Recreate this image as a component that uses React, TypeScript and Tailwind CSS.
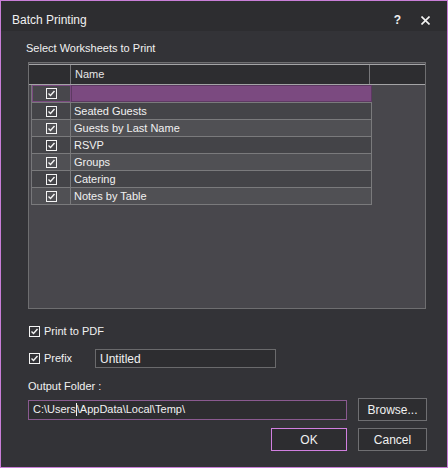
import React from "react";

const ROWS = [
  "",
  "Seated Guests",
  "Guests by Last Name",
  "RSVP",
  "Groups",
  "Catering",
  "Notes by Table",
];

function Check() {
  return (
    <svg width="11" height="11" viewBox="0 0 11 11" className="shrink-0">
      <rect x="0.5" y="0.5" width="10" height="10" fill="none" stroke="#f4f4f4" />
      <polyline
        points="2.5,5.5 4.5,7.5 8.5,3"
        fill="none"
        stroke="#f4f4f4"
        strokeWidth="1.4"
      />
    </svg>
  );
}

function Btn({ label, w, accent }: { label: string; w: string; accent?: boolean }) {
  return (
    <div
      className={`${w} flex h-[23px] items-center justify-center border bg-[#2d2d30] text-[12px] text-[#f1f1f1] ${
        accent ? "border-[#d17fe0]" : "border-[#6f6f72]"
      }`}
    >
      {label}
    </div>
  );
}

export default function App() {
  return (
    <div
      className="flex h-[468px] w-[448px] flex-col border border-[#c97ed8] bg-[#333337] text-[11px] text-[#f1f1f1]"
      style={{ fontFamily: '"Liberation Sans", Arial, sans-serif' }}
    >
      {/* title bar */}
      <div className="flex h-[30px] items-start bg-[#2d2d30] pl-[11px] pt-[12px] text-[12px] leading-[14px]">
        <span>Batch Printing</span>
        <span className="ml-auto mr-[20px] font-bold">?</span>
        <svg width="9" height="9" viewBox="0 0 9 9" className="mr-[17px] mt-[3px]">
          <path d="M0.5 0.5 L8.5 8.5 M8.5 0.5 L0.5 8.5" stroke="#f4f4f4" strokeWidth="1.6" />
        </svg>
      </div>

      <div className="mt-[9px] h-[16px] pl-[25px] leading-[16px]">Select Worksheets to Print</div>

      {/* worksheet grid */}
      <div className="ml-[27px] mt-[6px] h-[247px] w-[398px] border border-[#6e6e70] bg-[#48474c] pt-px">
        <div className="flex h-[21px] border-y border-[#a4a4a6] bg-[#2d2d30]">
          <div className="w-[41px]" />
          <div className="flex w-[299px] items-center border-l border-[#77777a] pl-[4px] text-[#e6e6e6]">
            Name
          </div>
          <div className="flex-1 border-l border-[#77777a]" />
        </div>
        <div className="ml-[2px] w-[341px] border-l border-[#77777a]">
          {ROWS.map((name, i) => {
            const sel = i === 0;
            const bg = i % 2 === 1 ? "bg-[#444448]" : "bg-[#505054]";
            return (
              <div
                key={i}
                className={`flex border-b border-[#7a7a7c] ${sel ? "h-[18px]" : "h-[17px]"}`}
              >
                <div
                  className={`flex w-[39px] items-center justify-center border-r ${
                    sel ? "border-[#7a4a80] bg-[#48474c] outline outline-[#7a4a80] -outline-offset-1" : `border-[#7a7a7c] ${bg}`
                  }`}
                >
                  <Check />
                </div>
                <div
                  className={`flex w-[301px] items-center border-r pl-[3px] ${
                    sel ? "border-[#5d3962] bg-[#7b4a80] outline outline-[#5d3962] -outline-offset-1" : `border-[#7a7a7c] ${bg}`
                  }`}
                >
                  {name}
                </div>
              </div>
            );
          })}
        </div>
      </div>

      {/* options */}
      <div className="ml-[28px] mt-[14px] flex h-[16px] items-center gap-[4px]">
        <Check />
        <span>Print to PDF</span>
      </div>
      <div className="ml-[28px] mt-[10px] flex h-[19px] items-center">
        <div className="flex w-[66px] items-center gap-[4px]">
          <Check />
          <span>Prefix</span>
        </div>
        <div className="flex h-[19px] w-[181px] items-center border border-[#6a6a6c] bg-[#2d2d30] pl-[4px] text-[12px]">
          Untitled
        </div>
      </div>

      <div className="ml-[27px] mt-[12px] h-[13px] leading-[13px]">Output Folder :</div>

      <div className="ml-[27px] mt-[5px] flex h-[23px] items-center gap-[11px]">
        <div className="flex h-[20px] w-[319px] items-center border border-[#8a5a90] bg-[#2d2d30] pl-[4px] text-[11px]">
          <span>{"C:\\Users"}</span>
          <span className="h-[13px] w-px bg-[#f1f1f1]" />
          <span>{"\\AppData\\Local\\Temp\\"}</span>
        </div>
        <Btn label="Browse..." w="w-[69px]" />
      </div>

      <div className="mt-[7px] flex justify-end gap-[11px] pr-[20px]">
        <Btn label="OK" w="w-[76px]" accent />
        <Btn label="Cancel" w="w-[69px]" />
      </div>
    </div>
  );
}
